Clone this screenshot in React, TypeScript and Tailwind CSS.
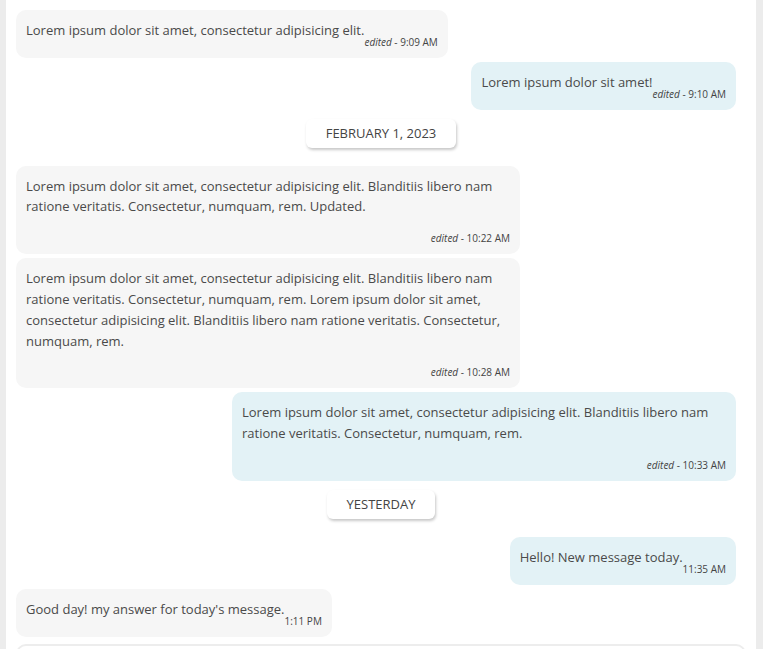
import { ReactNode } from 'react'

type Message = {
  id: number
  text: string
  time: string
  edited?: boolean
  mine?: boolean
  long?: boolean
}

type Item = { kind: 'msg'; msg: Message } | { kind: 'date'; label: string }

const items: Item[] = [
  {
    kind: 'msg',
    msg: {
      id: 1,
      text: 'Lorem ipsum dolor sit amet, consectetur adipisicing elit.',
      time: '9:09 AM',
      edited: true,
    },
  },
  {
    kind: 'msg',
    msg: { id: 2, text: 'Lorem ipsum dolor sit amet!', time: '9:10 AM', edited: true, mine: true },
  },
  { kind: 'date', label: 'February 1, 2023' },
  {
    kind: 'msg',
    msg: {
      id: 3,
      text: 'Lorem ipsum dolor sit amet, consectetur adipisicing elit. Blanditiis libero nam ratione veritatis. Consectetur, numquam, rem. Updated.',
      time: '10:22 AM',
      edited: true,
      long: true,
    },
  },
  {
    kind: 'msg',
    msg: {
      id: 4,
      text: 'Lorem ipsum dolor sit amet, consectetur adipisicing elit. Blanditiis libero nam ratione veritatis. Consectetur, numquam, rem. Lorem ipsum dolor sit amet, consectetur adipisicing elit. Blanditiis libero nam ratione veritatis. Consectetur, numquam, rem.',
      time: '10:28 AM',
      edited: true,
      long: true,
    },
  },
  {
    kind: 'msg',
    msg: {
      id: 5,
      text: 'Lorem ipsum dolor sit amet, consectetur adipisicing elit. Blanditiis libero nam ratione veritatis. Consectetur, numquam, rem.',
      time: '10:33 AM',
      edited: true,
      mine: true,
      long: true,
    },
  },
  { kind: 'date', label: 'Yesterday' },
  { kind: 'msg', msg: { id: 6, text: 'Hello! New message today.', time: '11:35 AM', mine: true } },
  { kind: 'msg', msg: { id: 7, text: "Good day! my answer for today's message.", time: '1:11 PM' } },
]

const TimeLabel = ({ msg }: { msg: Message }) => (
  <>
    {msg.edited && <i>edited</i>}
    {msg.edited && ' - '}
    {msg.time}
  </>
)

const Bubble = ({ msg }: { msg: Message }) => {
  const color = msg.mine ? 'bg-[#e3f2f6] self-end' : 'bg-[#f6f6f6] self-start'

  if (msg.long) {
    return (
      <div className={`${color} max-w-[70%] rounded-[10px] pl-[10px] pr-[10px] pt-[10px] pb-[10px]`}>
        <p className="text-[13px] leading-[1.6]">{msg.text}</p>
        <div className="mt-[15px] text-right text-[10px] leading-[12px] text-[#444]">
          <TimeLabel msg={msg} />
        </div>
      </div>
    )
  }

  return (
    <div className={`${color} max-w-[70%] rounded-[10px] pl-[10px] pr-[10px] pt-[10px] pb-[17px]`}>
      <p className="whitespace-nowrap text-[13px] leading-[1.6]">
        {msg.text}
        <span className="relative top-[11px] text-[10px] text-[#444]">
          <TimeLabel msg={msg} />
        </span>
      </p>
    </div>
  )
}

const DatePill = ({ children }: { children: ReactNode }) => (
  <div className="mt-[5px] mb-[14px] ml-[10px] self-center rounded-[6px] bg-white px-[20px] py-[6px] text-[13px] leading-[17px] uppercase text-[#444] shadow-[1px_2px_3px_rgba(0,0,0,0.22)]">
    {children}
  </div>
)

export default function App() {
  return (
    <div
      className="flex h-screen overflow-hidden bg-[#ececec] pl-[6px] pr-[7px] text-[#4a4a4a]"
      style={{ fontFamily: '"Open Sans", "Noto Sans", sans-serif' }}
    >
      <div className="flex flex-1 flex-col bg-white">
        <div className="flex flex-col gap-[4px] pt-[10px] pl-[10px] pr-[20px]">
          {items.map((item, i) =>
            item.kind === 'date' ? (
              <DatePill key={`d${i}`}>{item.label}</DatePill>
            ) : (
              <Bubble key={item.msg.id} msg={item.msg} />
            ),
          )}
        </div>
        <div className="mx-[10px] mt-[7px] h-[44px] shrink-0 rounded-[10px] border-2 border-[#ededed] bg-white" />
      </div>
    </div>
  )
}
